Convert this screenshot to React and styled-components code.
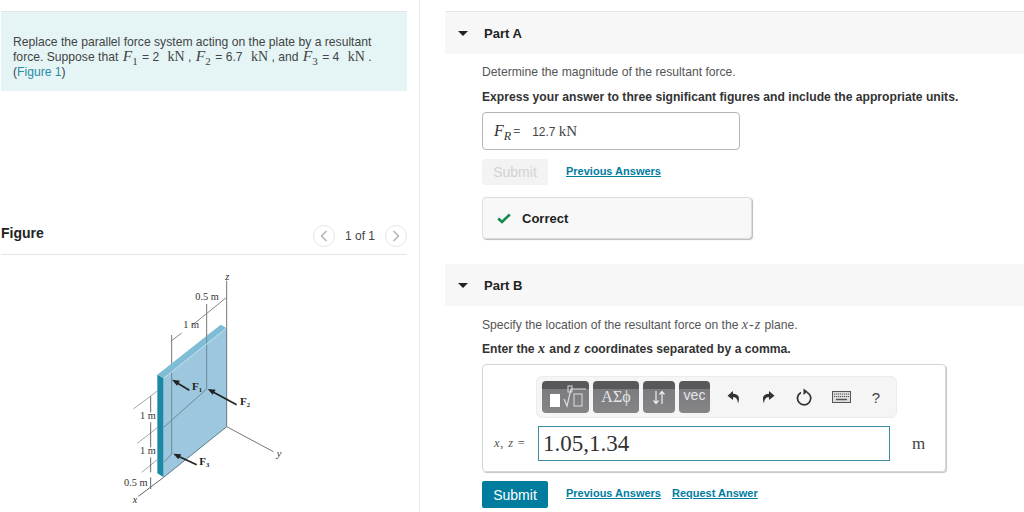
import React from 'react';
import styled, { createGlobalStyle } from 'styled-components';

const GlobalStyle = createGlobalStyle`
  html, body { margin: 0; padding: 0; background: #fff; }
  body { font-family: "Liberation Sans", Arial, sans-serif; color: #333; }
`;

const Var = ({ n, sub }) => (
  <ForceVar>
    <i>{n}</i>
    {sub && <sub>{sub}</sub>}
  </ForceVar>
);

const Plate = () => (
  <svg width="200" height="252" viewBox="0 0 600 756">
    <g fill="none" stroke="#777" strokeWidth="3">
      <path d="M380 65V207M215 228V358M320 135V240" />
      <path d="M215 245L245 222M275 200L380 115" stroke="#888" />
      <path d="M100 450L172 396M112 553L172 506M125 640L172 602" stroke="#a5a5a5" />
      <path d="M152 412V460M152 490V565M152 595V640" stroke="#666" />
      <path d="M152 655V690M191 655L115 712" stroke="#666" />
      <path d="M380 503L520 578" stroke="#777" />
    </g>
    <polygon points="172,347 191,358 380,207 362,197" fill="#7fbdd6" />
    <polygon points="172,347 191,358 191,655 172,643" fill="#1d88a6" />
    <polygon points="191,358 380,207 380,503 191,655" fill="#9cc7de" />
    <g fill="none" stroke="#6f8a98" strokeWidth="3">
      <path d="M215 340V585M320 225V390" />
      <path d="M191 505L320 390M191 610L215 585" />
      <path d="M191 358L380 207" stroke="#c5e0ec" />
      <path d="M380 207V503L191 655" stroke="#5f7a88" />
    </g>
    <g stroke="#222" strokeWidth="5" fill="#222">
      <path d="M268 394L228 370" />
      <path d="M410 437L335 397" />
      <path d="M290 617L232 590" />
    </g>
    <g fill="#222">
      <polygon points="216,362 240,365 231,380" />
      <polygon points="323,390 347,392 338,407" />
      <polygon points="220,584 244,586 235,601" />
    </g>
    <g fontFamily='"Liberation Serif", serif' fontSize="31" fill="#333">
      <text x="376" y="62" fontStyle="italic">z</text>
      <text x="286" y="122">0.5 m</text>
      <text x="250" y="206">1 m</text>
      <text x="120" y="480">1 m</text>
      <text x="120" y="585">1 m</text>
      <text x="72" y="682">0.5 m</text>
      <text x="98" y="732" fontStyle="italic">x</text>
      <text x="530" y="594" fontStyle="italic">y</text>
      <g fontWeight="bold" fill="#222" fontSize="33">
        <text x="276" y="394">F<tspan fontSize="20" dy="6">1</tspan></text>
        <text x="420" y="439">F<tspan fontSize="20" dy="6">2</tspan></text>
        <text x="298" y="618">F<tspan fontSize="20" dy="6">3</tspan></text>
      </g>
    </g>
  </svg>
);

const UndoIcon = ({ flip }) => (
  <svg width="14" height="14" viewBox="0 0 14 14" style={flip ? { transform: 'scaleX(-1)' } : undefined}>
    <path d="M6 1L0.5 5.8L6 10V7.3C9 7.2 10.6 8.8 11 13.5C13 8.5 12.4 4 6 3.8Z" fill="#333" />
  </svg>
);

const ResetIcon = () => (
  <svg width="16" height="18" viewBox="0 0 16 18">
    <path d="M5 4.4A6.6 6.6 0 1 0 10.8 4.2" fill="none" stroke="#333" strokeWidth="1.7" />
    <polygon points="7.5,0.5 7.5,7 11.5,3.6" fill="#333" />
  </svg>
);

const KeyboardIcon = () => (
  <svg width="19" height="12" viewBox="0 0 19 12">
    <rect x="0.5" y="0.5" width="18" height="11" fill="#ddd" stroke="#555" />
    <path d="M2 3H17M2 5.5H17" stroke="#555" strokeWidth="1.2" strokeDasharray="1.2 0.8" />
    <path d="M4 8.5H15" stroke="#555" strokeWidth="1.4" />
  </svg>
);

const App = () => (
  <Page>
    <GlobalStyle />
    <LeftColumn>
      <ProblemBox>
        Replace the parallel force system acting on the plate by a resultant
        <br />
        force. Suppose that <Var n="F" sub="1" /> = 2 <Unit>kN</Unit> , <Var n="F" sub="2" /> = 6.7 <Unit>kN</Unit> , and <Var n="F" sub="3" /> = 4 <Unit>kN</Unit> .
        <br />
        (<FigureLink>Figure 1</FigureLink>)
      </ProblemBox>
      <FigureHeader>
        <FigureTitle>Figure</FigureTitle>
        <Pager>
          <PageButton>
            <svg width="8" height="12" viewBox="0 0 8 12"><path d="M6.5 1L1.5 6L6.5 11" fill="none" stroke="#b5b5b5" strokeWidth="1.5" /></svg>
          </PageButton>
          <PageCount>1 of 1</PageCount>
          <PageButton>
            <svg width="8" height="12" viewBox="0 0 8 12"><path d="M1.5 1L6.5 6L1.5 11" fill="none" stroke="#b5b5b5" strokeWidth="1.5" /></svg>
          </PageButton>
        </Pager>
      </FigureHeader>
      <FigureWrap>
        <Plate />
      </FigureWrap>
    </LeftColumn>

    <RightColumn>
      <PartHeader>
        <Caret />
        <PartTitle>Part A</PartTitle>
      </PartHeader>
      <PartBody $top={11}>
        <Prompt>Determine the magnitude of the resultant force.</Prompt>
        <Instruction $gap={10}>Express your answer to three significant figures and include the appropriate units.</Instruction>
        <AnswerBox>
          <AnswerLabel><i>F</i><sub><i>R</i></sub></AnswerLabel>
          <Equals>=</Equals>
          <AnswerValue>12.7 <AnswerUnit>kN</AnswerUnit></AnswerValue>
        </AnswerBox>
        <ActionRow>
          <SubmitButton disabled>Submit</SubmitButton>
          <ActionLink>Previous Answers</ActionLink>
        </ActionRow>
        <CorrectBox>
          <svg width="14" height="11" viewBox="0 0 14 11"><path d="M1.2 5.5L5 9L12.8 1.5" fill="none" stroke="#0f8a4a" strokeWidth="2.6" /></svg>
          Correct
        </CorrectBox>
      </PartBody>

      <PartHeader $second>
        <Caret />
        <PartTitle>Part B</PartTitle>
      </PartHeader>
      <PartBody $top={12}>
        <Prompt>Specify the location of the resultant force on the <MathText><i>x</i>-<i>z</i></MathText> plane.</Prompt>
        <Instruction $gap={9}>Enter the <MathText><i>x</i></MathText> and <MathText><i>z</i></MathText> coordinates separated by a comma.</Instruction>
        <EditorPanel>
          <Toolbar>
            <ToolButton $w={47}>
              <svg width="40" height="24" viewBox="0 0 40 24">
                <rect x="4" y="9" width="10" height="13" fill="#fff" />
                <rect x="22" y="1" width="4" height="6" fill="none" stroke="#ddd" />
                <path d="M18 14L21 21L25 4H40" fill="none" stroke="#ddd" strokeWidth="1.2" />
                <rect x="28" y="9" width="8" height="12" fill="none" stroke="#ddd" />
              </svg>
            </ToolButton>
            <ToolButton $w={46} $size={16}>ΑΣϕ</ToolButton>
            <ToolButton $w={32}>
              <svg width="14" height="15" viewBox="0 0 14 15">
                <path d="M4 1V13M1.5 10.5L4 13.5L6.5 10.5M10 14V2M7.5 4.5L10 1.5L12.5 4.5" fill="none" stroke="#eee" strokeWidth="1.2" />
              </svg>
            </ToolButton>
            <ToolButton $w={31} $sans>vec</ToolButton>
            <ToolIcons>
              <UndoIcon />
              <UndoIcon flip />
              <ResetIcon />
              <KeyboardIcon />
              <Help>?</Help>
            </ToolIcons>
          </Toolbar>
          <InputRow>
            <InputLabel><i>x</i>, <i>z</i> =</InputLabel>
            <ValueField>1.05,1.34</ValueField>
            <UnitLabel>m</UnitLabel>
          </InputRow>
        </EditorPanel>
        <ActionRow>
          <SubmitButton>Submit</SubmitButton>
          <ActionLink>Previous Answers</ActionLink>
          <ActionLink $tight>Request Answer</ActionLink>
        </ActionRow>
      </PartBody>
    </RightColumn>
  </Page>
);

const Page = styled.div`
  width: 1024px;
  height: 512px;
  display: flex;
  overflow: hidden;
  background: #fff;
`;

const LeftColumn = styled.div`
  width: 420px;
  flex: none;
  box-sizing: border-box;
  padding: 11px 12px 0 1px;
  border-right: 1px solid #e6ecef;
`;

const ProblemBox = styled.div`
  height: 80px;
  box-sizing: border-box;
  padding: 23px 12px 0;
  background: #e5f5f6;
  border-top: 1px solid #e0e6e8;
  font-size: 12.15px;
  line-height: 15px;
  color: #444;
  white-space: nowrap;
`;

const MathText = styled.span`
  font-family: "Liberation Serif", serif;
  font-size: 14px;
  letter-spacing: 1px;
  line-height: 0;
`;

const ForceVar = styled.span`
  margin: 0 1px 0 1px;
  font-family: "Liberation Serif", serif;
  font-size: 15.5px;
  line-height: 0;
  sub {
    font-size: 11px;
    line-height: 0;
  }
`;

const Unit = styled.span`
  font-family: "Liberation Serif", serif;
  font-size: 14px;
  line-height: 0;
  margin-left: 5px;
`;

const FigureLink = styled.span`
  color: #2b8aa6;
`;

const FigureHeader = styled.div`
  margin-top: 128px;
  height: 36px;
  box-sizing: border-box;
  padding-bottom: 2px;
  display: flex;
  align-items: center;
  justify-content: space-between;
  border-bottom: 1px solid #e5e5e5;
`;

const FigureTitle = styled.h3`
  margin: 0 0 6px;
  font-size: 14px;
  font-weight: bold;
  color: #222;
`;

const Pager = styled.div`
  display: flex;
  align-items: center;
`;

const PageButton = styled.span`
  width: 22px;
  height: 22px;
  box-sizing: border-box;
  border: 1px solid #e8e8e8;
  border-radius: 50%;
  display: flex;
  align-items: center;
  justify-content: center;
`;

const PageCount = styled.span`
  margin: 0 10px;
  font-size: 12px;
  color: #444;
`;

const FigureWrap = styled.div`
  margin: 4px 0 0 99px;
`;

const RightColumn = styled.div`
  flex: 1;
  padding: 11px 0 0 25px;
  min-width: 0;
`;

const PartHeader = styled.div`
  height: ${p => (p.$second ? '42px' : '43px')};
  box-sizing: border-box;
  margin-top: ${p => (p.$second ? '25px' : '0')};
  display: flex;
  align-items: center;
  padding-left: 13px;
  background: #f7f7f7;
  border-top: ${p => (p.$second ? '0' : '1px solid #e6e6e6')};
`;

const Caret = styled.span`
  width: 0;
  height: 0;
  border-left: 5px solid transparent;
  border-right: 5px solid transparent;
  border-top: 5px solid #222;
`;

const PartTitle = styled.span`
  margin-left: 16px;
  font-size: 13px;
  font-weight: bold;
  color: #222;
`;

const PartBody = styled.div`
  padding: ${p => p.$top}px 0 0 37px;
`;

const Prompt = styled.div`
  font-size: 12.15px;
  line-height: 15px;
  color: #555;
`;

const Instruction = styled.div`
  margin-top: ${p => p.$gap}px;
  font-size: 12.15px;
  line-height: 15px;
  font-weight: bold;
  color: #333;
  white-space: nowrap;
`;

const AnswerBox = styled.div`
  width: 258px;
  height: 38px;
  box-sizing: border-box;
  margin-top: 7px;
  padding-left: 11px;
  display: flex;
  align-items: center;
  border: 1px solid #b5b5b5;
  border-radius: 4px;
`;

const AnswerLabel = styled.span`
  font-family: "Liberation Serif", serif;
  font-size: 16px;
  color: #333;
  sub {
    font-size: 12px;
    line-height: 0;
  }
`;

const Equals = styled.span`
  margin: 0 12px 0 2px;
  font-size: 12px;
  color: #555;
`;

const AnswerValue = styled.span`
  font-size: 12px;
  color: #444;
`;

const AnswerUnit = styled.span`
  font-family: "Liberation Serif", serif;
  font-size: 15px;
`;

const ActionRow = styled.div`
  display: flex;
  align-items: center;
  margin-top: 9px;
`;

const SubmitButton = styled.button`
  width: 66px;
  height: ${p => (p.disabled ? '26px' : '27px')};
  padding: 0;
  border: 0;
  border-radius: 2px;
  font-family: inherit;
  font-size: 14px;
  background: ${p => (p.disabled ? '#f3f3f3' : '#007c9f')};
  color: ${p => (p.disabled ? '#d2d2d2' : '#fff')};
`;

const ActionLink = styled.a`
  margin-left: ${p => (p.$tight ? '11px' : '18px')};
  margin-bottom: 3px;
  font-size: 11px;
  font-weight: bold;
  color: #007c9f;
  text-decoration: underline;
`;

const CorrectBox = styled.div`
  width: 270px;
  height: 42px;
  box-sizing: border-box;
  margin-top: 12px;
  padding-left: 14px;
  display: flex;
  align-items: center;
  gap: 11px;
  background: #f8f8f8;
  border: 1px solid #ddd;
  border-radius: 4px;
  box-shadow: 1px 1px 1px #bbb;
  font-size: 13px;
  font-weight: bold;
  color: #222;
`;

const EditorPanel = styled.div`
  width: 464px;
  height: 108px;
  box-sizing: border-box;
  margin-top: 7px;
  padding: 11px 0 0 10px;
  border: 1px solid #d5d5d5;
  border-radius: 4px;
  box-shadow: 1px 1px 1px #c5c5c5;
`;

const Toolbar = styled.div`
  width: 361px;
  height: 42px;
  box-sizing: border-box;
  margin-left: 43px;
  padding: 4px 5px;
  display: flex;
  gap: 4px;
  background: #f5f5f5;
  border: 1px solid #ececec;
  border-radius: 6px;
`;

const ToolButton = styled.span`
  width: ${p => p.$w}px;
  height: 32px;
  flex: none;
  box-sizing: border-box;
  padding-bottom: ${p => (p.$sans ? '4px' : '0')};
  display: flex;
  align-items: center;
  justify-content: center;
  border-radius: 4px;
  background: linear-gradient(#58585a 0 8px, #7c7c80 8px, #858588);
  font-family: ${p => (p.$sans ? '"Liberation Sans", sans-serif' : '"Liberation Serif", serif')};
  font-size: ${p => p.$size || 14}px;
  color: #e6e6e6;
`;

const ToolIcons = styled.div`
  flex: 1;
  display: flex;
  align-items: center;
  justify-content: space-between;
  padding: 0 11px 0 13px;
`;

const Help = styled.span`
  font-size: 15px;
  color: #444;
`;

const InputRow = styled.div`
  margin-top: 8px;
  display: flex;
  align-items: center;
`;

const InputLabel = styled.span`
  width: 45px;
  flex: none;
  padding-left: 1px;
  box-sizing: border-box;
  font-family: "Liberation Serif", serif;
  font-size: 12.5px;
  letter-spacing: 0.8px;
  color: #555;
`;

const ValueField = styled.div`
  width: 352px;
  height: 35px;
  box-sizing: border-box;
  padding-left: 4px;
  display: flex;
  align-items: center;
  border: 1px solid #3d8ba4;
  font-family: "Liberation Serif", serif;
  font-size: 23px;
  color: #333;
`;

const UnitLabel = styled.span`
  margin-left: 22px;
  font-family: "Liberation Serif", serif;
  font-size: 17px;
  color: #444;
`;

export default App;
